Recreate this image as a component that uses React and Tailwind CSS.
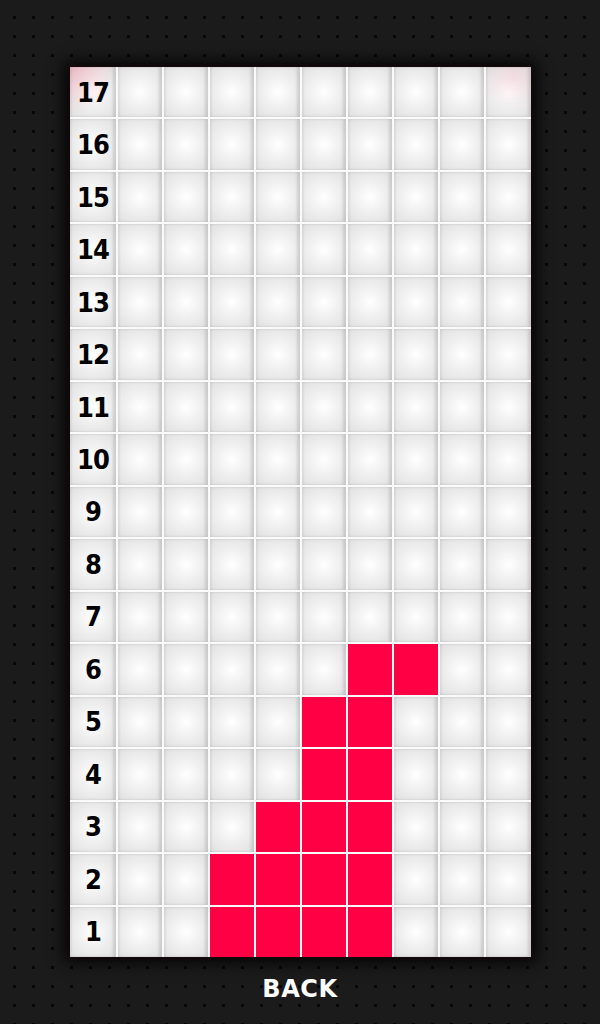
const ROWS = 17;
const COLS = 9;

// filled cells per row (row number -> column numbers, 1-based)
const FILLED = {
  6: [6, 7],
  5: [5, 6],
  4: [5, 6],
  3: [4, 5, 6],
  2: [3, 4, 5, 6],
  1: [3, 4, 5, 6],
};

const cellBg =
  "bg-[radial-gradient(circle_at_center,#ffffff_0%,#f0f0f0_45%,#e0e0e0_100%)] shadow-[inset_2px_0_2px_rgba(0,0,0,0.06),inset_-3px_0_3px_rgba(0,0,0,0.12)]";

function Cell({ filled, tint }) {
  if (filled) return <div className="bg-[#ff0044]" />;
  return (
    <div className={`relative ${cellBg}`}>
      {tint && (
        <div className="absolute inset-0 bg-[radial-gradient(circle_at_60%_20%,rgba(255,80,120,0.12),transparent_70%)]" />
      )}
    </div>
  );
}

export default function App() {
  const rows = Array.from({ length: ROWS }, (_, i) => ROWS - i);

  return (
    <div
      className="w-[600px] h-[1024px] bg-[#1b1b1b] bg-[radial-gradient(circle,#070707_1.4px,transparent_2px)] bg-[length:19px_19px] bg-[position:5px_8px] flex flex-col items-center overflow-hidden"
      style={{ fontFamily: '"DejaVu Sans", "Liberation Sans", sans-serif' }}
    >
      {/* Board */}
      <div className="mt-[67px] ml-[1px] w-[461px] h-[890px] bg-[#fafafa] shadow-[0_0_14px_6px_rgba(0,0,0,0.85),0_0_3px_rgba(255,0,60,0.35)] grid grid-cols-[46px_repeat(8,44px)_45px] grid-rows-[repeat(17,1fr)] gap-[2px]">
        {rows.map((r) => (
          <div key={r} className="contents">
            <div
              className={`relative flex items-center justify-center text-[27px] font-bold text-black leading-none ${cellBg}`}
              style={{ fontFamily: '"DejaVu Sans Condensed", "DejaVu Sans", sans-serif' }}
            >
              {r === ROWS && (
                <div className="absolute inset-0 bg-[radial-gradient(circle_at_0%_0%,rgba(255,60,100,0.25),transparent_70%)]" />
              )}
              <span className="relative tracking-[-1px]">{r}</span>
            </div>
            {Array.from({ length: COLS }, (_, c) => (
              <Cell
                key={c}
                filled={(FILLED[r] || []).includes(c + 1)}
                tint={r === ROWS && c === COLS - 1}
              />
            ))}
          </div>
        ))}
      </div>

      {/* Back button */}
      <button className="mt-[20px] text-white text-[24px] font-bold tracking-wide leading-none">
        BACK
      </button>
    </div>
  );
}
